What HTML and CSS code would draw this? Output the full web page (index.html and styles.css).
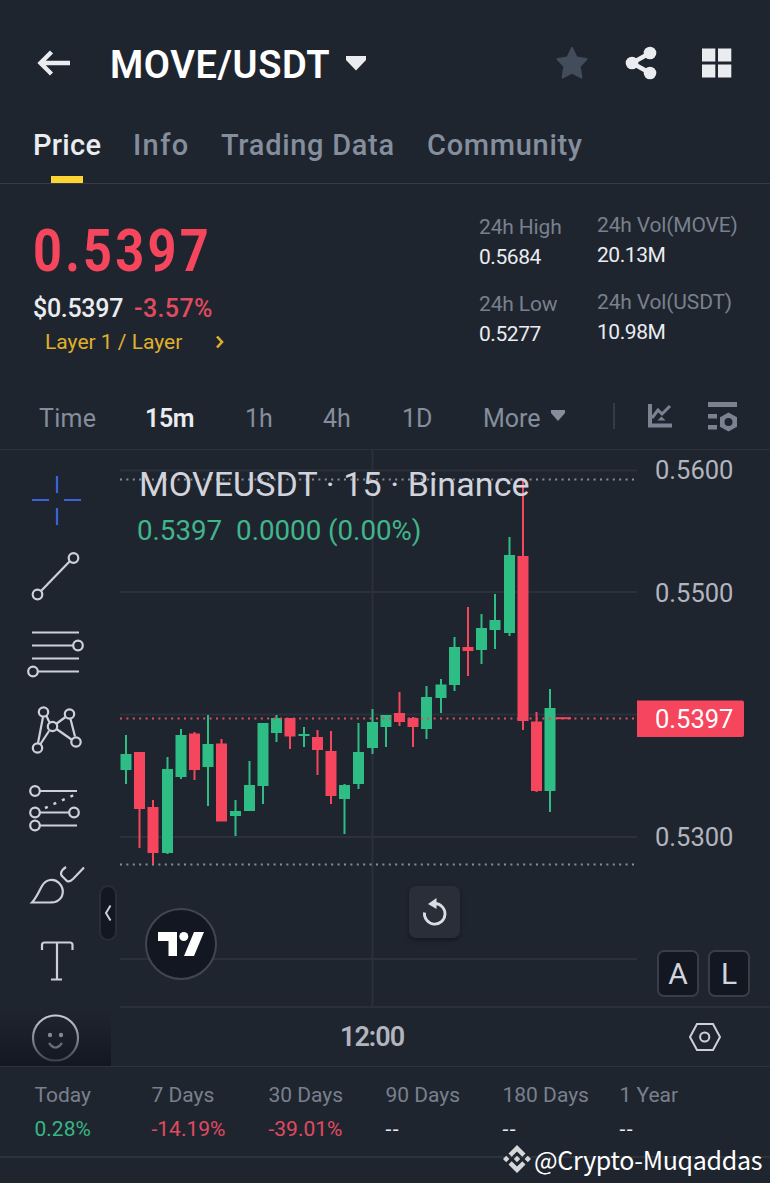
FILE: index.html
```html
<!DOCTYPE html>
<html lang="en">
<head>
  <meta charset="utf-8">
  <title>MOVE/USDT</title>
  <link rel="stylesheet" href="styles.css">
</head>

<body>
  <header class="header">
    <svg class="back" width="34" height="28" viewBox="0 0 34 28"><path d="M15.500 3L4.500 14L15.500 25M4 14H34" fill="none" stroke="#eaecef" stroke-width="4.400"/></svg>
    <h1>MOVE/USDT</h1>
    <svg class="caret" width="22" height="16" viewBox="0 0 22 16"><path d="M1 1H21V5L11 15.500L1 5Z" fill="#eaecef"/></svg>
    <div class="actions">
      <svg width="34" height="34" viewBox="0 0 34 34"><path d="M17 2L21.500 11.500L31.500 13L24.500 20.500L26.500 31.500L17 26.500L7.500 31.500L9.500 20.500L2.500 13L12.500 11.500Z" fill="#434c5a" stroke="#434c5a" stroke-width="2" stroke-linejoin="round"/></svg>
      <svg width="34" height="34" viewBox="0 0 34 34"><path d="M26 7L8 17L26 27" fill="none" stroke="#eaecef" stroke-width="4.400"/><g fill="#eaecef"><circle cx="26" cy="7" r="6.300"/><circle cx="8" cy="17" r="6.300"/><circle cx="26" cy="27" r="6.300"/></g></svg>
      <svg width="30" height="30" viewBox="0 0 30 30"><path d="M0 .500H13.300V13.500H0ZM16 .500H29.300V13.500H16ZM0 16.500H13.300V29.500H0ZM16 16.500H29.300V29.500H16Z" fill="#eaecef"/></svg>
    </div>
  </header>

  <nav class="tabs">
    <a class="tab active">Price</a>
    <a class="tab info">Info</a>
    <a class="tab data">Trading Data</a>
    <a class="tab community">Community</a>
  </nav>

  <section class="summary">
    <div class="quote">
      <div class="price">0.5397</div>
      <div class="change"><span class="usd">$0.5397</span><span class="percent red">-3.57%</span></div>
      <div class="tag"><span>Layer 1 / Layer</span><svg width="8" height="14" viewBox="0 0 8 14"><path d="M1 1.500L6 7L1 12.500" fill="none" stroke="#e0b02a" stroke-width="2.600"/></svg></div>
    </div>
    <div class="stats">
      <div class="stat"><span class="label">24h High</span><span class="value">0.5684</span></div>
      <div class="stat"><span class="label">24h Low</span><span class="value">0.5277</span></div>
    </div>
    <div class="stats volume">
      <div class="stat"><span class="label">24h Vol(MOVE)</span><span class="value">20.13M</span></div>
      <div class="stat"><span class="label">24h Vol(USDT)</span><span class="value">10.98M</span></div>
    </div>
  </section>

  <nav class="intervals">
    <span class="time">Time</span>
    <span class="m15">15m</span>
    <span class="h1">1h</span>
    <span class="h4">4h</span>
    <span class="d1">1D</span>
    <span class="more">More</span>
    <svg class="open" width="14" height="11" viewBox="0 0 14 11"><path d="M0 0H14V3L7 11L0 3Z" fill="#848e9c"/></svg>
    <i class="divider"></i>
    <svg class="indicator" width="24" height="24" viewBox="0 0 24 24"><path d="M2 0V21.500H24" fill="none" stroke="#7d8293" stroke-width="4"/><path d="M4 14L10 6L14 10L22 2" fill="none" stroke="#7d8293" stroke-width="3"/><path d="M9.500 16.500L13.500 12.500L17.500 16.500Z" fill="#7d8293"/></svg>
    <svg class="settings" width="30" height="30" viewBox="0 0 30 30"><path d="M0 0H29V5H0ZM0 12H9V16.500H0ZM0 23H9V27.500H0Z" fill="#7d8293"/><path d="M20.500 10.500L29 15.200V24.800L20.500 29.500L12 24.800V15.200ZM20.500 16A4 4 0 1 0 20.500 24A4 4 0 1 0 20.500 16Z" fill="#7d8293" fill-rule="evenodd"/></svg>
  </nav>

  <main class="chart">
    <aside class="tools">
      <!-- drawing tools: cross, trend line, fib, pattern, forecast, brush, text, emoji -->
      <svg width="111" height="616" viewBox="0 450 111 616" fill="none" stroke="#cdd0da" stroke-width="2.200">
        <defs>
          <linearGradient id="fade" x1="0" y1="1010" x2="0" y2="1066" gradientUnits="userSpaceOnUse"><stop offset="0" stop-color="#131722" stop-opacity="0"/><stop offset="1" stop-color="#131722"/></linearGradient>
          <linearGradient id="face" x1="0" y1="1014" x2="0" y2="1062" gradientUnits="userSpaceOnUse"><stop offset="0" stop-color="#cdd0da"/><stop offset="1" stop-color="#3b3f49"/></linearGradient>
        </defs>
        <path d="M0 1010H111V1066H0Z" fill="url(#fade)" stroke="none"/>
        <path d="M57 476V493M57 508V525M32 500H49M64 500H81" stroke="#3c63dc"/>
        <path d="M41 591L70 561"/><circle cx="37.500" cy="594.500" r="4.800"/><circle cx="73.500" cy="558" r="4.800"/>
        <path d="M32 632.500H79M32 645.500H73M32 658.500H79M38 671.500H79"/><circle cx="78" cy="645.500" r="4.800"/><circle cx="33" cy="671.500" r="4.800"/>
        <path d="M43 717L38 743M46.500 716L49.500 722.500M49 731L40.500 744M56 724L65.500 717M70.500 719L75 736.500M56.500 729L71.500 739.500"/><circle cx="43.500" cy="712" r="4.700"/><circle cx="69.500" cy="714" r="4.700"/><circle cx="52.500" cy="726.500" r="4.700"/><circle cx="37.500" cy="748" r="4.700"/><circle cx="76" cy="742" r="4.700"/>
        <path d="M40 791H77M40 812.500H69M40 825.500H77"/><path d="M45 808L75 794.500" stroke-dasharray="3 6.300" stroke-width="2.500"/><circle cx="35" cy="791" r="4.800"/><circle cx="35" cy="812.500" r="4.800"/><circle cx="74" cy="812.500" r="4.800"/><circle cx="35" cy="825.500" r="4.800"/>
        <path d="M32 902.500C37 897 39 891 42 886C46 879 54 878 59 883C65 889 64 899 55 902C53 902.500 51 902.500 49 902.500ZM66 867C60 871 60 875 63 877L67 881C69 882 71 881 73 879L84 867.500"/>
        <path d="M42 950V945Q42 942.500 44.500 942.500H70Q72.500 942.500 72.500 945V950M57 942.500V979.500M51 979.500H62"/>
        <circle cx="55.500" cy="1038" r="22.500" stroke="url(#face)"/><path d="M49 1043Q55.500 1052 62 1043" stroke="#6a6d78"/><g fill="#85888f" stroke="none"><circle cx="50" cy="1035" r="2.200"/><circle cx="61" cy="1035" r="2.200"/></g>
      </svg>
      <button class="collapse"><svg width="8" height="18" viewBox="0 0 8 18"><path d="M6.500 1.500L2 9L6.500 16.500" fill="none" stroke="#cdd0da" stroke-width="2"/></svg></button>
    </aside>

    <div class="plot">
      <svg width="659" height="616" viewBox="111 450 659 616">
        <path class="grid" d="M120 470.500H637M120 592H637M120 714.500H637M120 837H637M120 959H637M372.500 450V1006"/>
        <path class="axis" d="M120 1007H770"/>
        <path class="range" d="M120 479.500H636M120 864.500H636"/>

        <g class="up">
          <path d="M126 735V784M167.500 757V854M181 729V779M208 715V806M235.500 800V836M249.500 761V811M263 723V804M276.500 715V742M304 727V747M344.500 784V834M358.500 723V789M372.500 709V754M386 715V747M426.500 686V739M441 679V713M454.500 637V691M481.500 614V664M495 594V649M509.500 537V636M550 689V812"/>
          <path class="body" d="M126 754V770M167.500 769V853M181 735V777M208 744V767M235.500 811V816M249.500 785V811M263 723V786M276.500 718V733M304 734V736M344.500 785V799M358.500 752V784M372.500 722V748M386 715V727M426.500 697V729M441 684.500V698M454.500 647V685M481.500 628V650M495 620V630M509.500 555V633M550 708V791"/>
        </g>
        <g class="down">
          <path d="M139.500 752V848M153 800V864M194.500 732V780M221.500 739V821M290 718V749M317.500 730V775M331 731V804M399.500 692V726M413 717V747M468 607V676M523 480V730M536.500 712V792"/>
          <path class="body" d="M139.500 752V809M153 807V853M194.500 733.500V770M221.500 743.500V821.500M290 718V736.500M317.500 737V750M331 751V796M399.500 713V722M413 718V727M468 647V651M523 556V721M536.500 721.500V791"/>
        </g>
        <path class="last" d="M120 718.500H636"/>
        <path d="M556 718.200H571" stroke="#f6465d" stroke-width="2"/>

        <path d="M637 700.500H742Q744 700.500 744 702.500V735Q744 737 742 737H637Z" fill="#f6465d"/>
        <g class="scale">
          <text x="655" y="479">0.5600</text>
          <text x="655" y="601.500">0.5500</text>
          <text class="now" x="655" y="728">0.5397</text>
          <text x="655" y="846">0.5300</text>
          <text class="clock" x="340" y="1046">12:00</text>
        </g>
        <path d="M697 1024H713L720 1037L713 1050H697L690 1037Z" fill="none" stroke="#cdd0da" stroke-width="2"/>
        <circle cx="704.700" cy="1037" r="4.600" fill="none" stroke="#cdd0da" stroke-width="2"/>
      </svg>
      <div class="legend">
        <div class="name">MOVEUSDT · 15 · Binance</div>
        <div class="ohlc"><span>0.5397</span><span>0.0000 (0.00%)</span></div>
      </div>
      <div class="logo"><svg width="46" height="24" viewBox="0 0 46 24" fill="#fff"><path d="M0 0H19V24H10.500V9H0ZM36 0H46L36 24H26Z"/><circle cx="25.800" cy="4.500" r="4.500"/></svg></div>
      <button class="reset"><svg width="26" height="28" viewBox="0 0 26 28"><path d="M2.500 14.500A10.300 10.300 0 1 0 13 5.500" fill="none" stroke="#dbdde5" stroke-width="2.800"/><path d="M6 6L14.500 0V11Z" fill="#dbdde5"/></svg></button>
      <div class="modes"><button>A</button><button>L</button></div>
    </div>
  </main>

  <section class="performance">
    <div class="period"><span>Today</span><b class="green">0.28%</b></div>
    <div class="period"><span>7 Days</span><b class="red">-14.19%</b></div>
    <div class="period"><span>30 Days</span><b class="red">-39.01%</b></div>
    <div class="period"><span>90 Days</span><b class="none">--</b></div>
    <div class="period"><span>180 Days</span><b class="none">--</b></div>
    <div class="period"><span>1 Year</span><b class="none">--</b></div>
  </section>

  <div class="watermark">
    <svg width="28" height="28" viewBox="0 0 28 28" fill="#d6d6d6"><path d="M14 0L22.500 8.500L19.300 11.700L14 6.400L8.700 11.700L5.500 8.500ZM3.200 10.800L6.400 14L3.200 17.200L0 14ZM14 10.800L17.200 14L14 17.200L10.800 14ZM24.800 10.800L28 14L24.800 17.200L21.600 14ZM5.500 19.500L8.700 16.300L14 21.600L19.300 16.300L22.500 19.500L14 28Z"/></svg>
    <span>@Crypto-Muqaddas</span>
  </div>
</body>
</html>
```
FILE: styles.css
```css
* {
  box-sizing: border-box;
}
body {
  margin: 0;
  width: 770px;
  height: 1183px;
  overflow: hidden;
  position: relative;
  background: #1f252f;
  color: #eaecef;
  font-family: Roboto, sans-serif;
}
svg {
  display: block;
  flex: none;
}
button {
  padding: 0;
  border: none;
  font-family: inherit;
}
span, a, h1, div {
  white-space: nowrap;
}
.red {
  color: #e04b60;
}
.green {
  color: #37b584;
}

.header {
  display: flex;
  align-items: center;
  height: 126px;
  padding-left: 36px;
}
.header h1 {
  margin: 3px 0 0 40px;
  width: 219px;
  font-size: 38px;
  font-weight: 600;
  letter-spacing: .6px;
  color: #fff;
}
.caret {
  margin-left: 16px;
}
.actions {
  display: flex;
  align-items: center;
  margin-left: auto;
  padding-right: 38px;
}
.actions svg + svg {
  margin-left: 35px;
}
.actions svg:last-child {
  margin-left: 44px;
}

.tabs {
  display: flex;
  height: 58px;
  padding-left: 33px;
  border-bottom: 1px solid #353c47;
  color: #848e9c;
  font-size: 29px;
  font-weight: 500;
  letter-spacing: .7px;
  line-height: 38px;
}
.tab {
  width: 67px;
  margin-right: 33px;
}
.tab.active {
  color: #eaecef;
  letter-spacing: .3px;
  background: linear-gradient(#fcd535, #fcd535) 18px 50px / 32px 7px no-repeat;
}
.tab.info {
  width: 55px;
  letter-spacing: 1.4px;
}
.tab.data {
  width: 173px;
}

.summary {
  display: flex;
  height: 196px;
  padding: 0 0 0 33px;
}
.quote {
  width: 446px;
  padding-top: 32px;
}
/* tall narrow digits */
.price {
  height: 72px;
  line-height: 69px;
  font-size: 59px;
  font-weight: 700;
  letter-spacing: 3.800px;
  color: #f6465d;
  transform: scaleX(.855);
  transform-origin: left;
}
.change {
  display: flex;
  height: 38px;
  line-height: 41px;
  font-size: 25px;
  font-weight: 500;
}
.usd {
  width: 101px;
  letter-spacing: -.3px;
}
.percent {
  letter-spacing: .4px;
}
.tag {
  display: flex;
  align-items: center;
  height: 31px;
  padding-left: 12px;
  color: #e0b02a;
  font-size: 21px;
}
.tag svg {
  margin-left: 34px;
}
.stats {
  width: 118px;
  padding-top: 29px;
  font-size: 21px;
  letter-spacing: -.15px;
}
.volume {
  padding-top: 27px;
}
.stat {
  display: flex;
  flex-direction: column;
  height: 77px;
  line-height: 29px;
}
.label {
  color: #79808d;
}
.value {
  padding-top: 1px;
  letter-spacing: -.45px;
}

.intervals {
  display: flex;
  align-items: center;
  height: 70px;
  padding: 8px 0 0 39px;
  border-bottom: 1px solid #2b313b;
  color: #848e9c;
  font-size: 25px;
}
.time {
  width: 106px;
  letter-spacing: .3px;
}
.m15 {
  width: 100px;
  color: #eaecef;
  font-weight: 600;
  letter-spacing: -.4px;
}
.h1 { width: 78px; }
.h4 { width: 79px; }
.d1 { width: 81px; }
.more { width: 68px; }
.open {
  margin-top: -6px;
}
.divider {
  width: 2px;
  height: 26px;
  margin: -6px 33px 0 48px;
  background: #343b46;
}
.indicator {
  margin-top: -6px;
}
.settings {
  margin: -4px 0 0 36px;
}

.chart {
  display: flex;
  height: 617px;
  border-bottom: 1px solid #2d323c;
}
.tools {
  position: relative;
  width: 111px;
}
.plot {
  position: relative;
  flex: 1;
}
.grid {
  stroke: #2b303a;
  stroke-width: 2;
  fill: none;
}
.axis {
  stroke: #2a2f39;
  stroke-width: 2;
}
.range {
  stroke: #8a8d96;
  stroke-width: 2;
  stroke-dasharray: 2 4.400;
}
.last {
  stroke: #d8505f;
  stroke-width: 2;
  stroke-dasharray: 2 4.400;
}
.up {
  stroke: #2ebd85;
  stroke-width: 2;
}
.down {
  stroke: #f6465d;
  stroke-width: 2;
}
.body {
  stroke-width: 11;
}
.scale {
  fill: #b2b5be;
  font-size: 25.500px;
}
.scale .now {
  fill: #fff;
}
.scale .clock {
  font-size: 27px;
  font-weight: 600;
  letter-spacing: -1px;
}
/* overlays on top of the candles */
.collapse {
  position: absolute;
  left: 99px;
  top: 435px;
  width: 18px;
  height: 56px;
  display: flex;
  align-items: center;
  justify-content: center;
  background: #131722;
  border: 2px solid #292d38;
  border-radius: 9px;
  z-index: 1;
}
.legend {
  position: absolute;
  left: 26px;
  top: 13px;
  color: #d1d4dc;
}
.name {
  padding-left: 2px;
  font-size: 34px;
  line-height: 43px;
  letter-spacing: .1px;
}
.ohlc {
  display: flex;
  gap: 14px;
  font-size: 27.700px;
  line-height: 50px;
  color: #41b58b;
}
.logo {
  position: absolute;
  left: 34px;
  top: 458px;
  width: 72px;
  height: 72px;
  display: flex;
  align-items: center;
  justify-content: center;
  background: #131722;
  border: 2px solid #434651;
  border-radius: 50%;
}
.reset {
  position: absolute;
  left: 298px;
  top: 436px;
  width: 51px;
  height: 52px;
  display: flex;
  align-items: center;
  justify-content: center;
  background: #2a2e39;
  border-radius: 7px;
  box-shadow: 0 2px 5px rgba(0, 0, 0, .4);
}
.modes {
  position: absolute;
  left: 546px;
  top: 500px;
  display: flex;
  gap: 9px;
}
.modes button {
  width: 42px;
  height: 47px;
  background: #131722;
  border: 2px solid #3a3d48;
  border-radius: 7px;
  color: #d1d4dc;
  font-size: 30px;
}

.performance {
  display: grid;
  grid-template-columns: repeat(6, 117px);
  height: 91px;
  padding: 11px 0 0 34.500px;
  border-bottom: 2px solid #2d333d;
  font-size: 21px;
  line-height: 34px;
}
.period {
  display: flex;
  flex-direction: column;
}
.period span {
  color: #79808d;
}
.period b {
  font-weight: 400;
}
.period .none {
  letter-spacing: 1.500px;
}
.watermark {
  position: absolute;
  left: 503px;
  top: 1145px;
  display: flex;
  align-items: center;
  gap: 3px;
  color: #fff;
  font-family: "Noto Sans CJK SC", sans-serif;
  font-size: 25px;
  letter-spacing: -.3px;
}
.watermark span {
  line-height: 28px;
}
```
